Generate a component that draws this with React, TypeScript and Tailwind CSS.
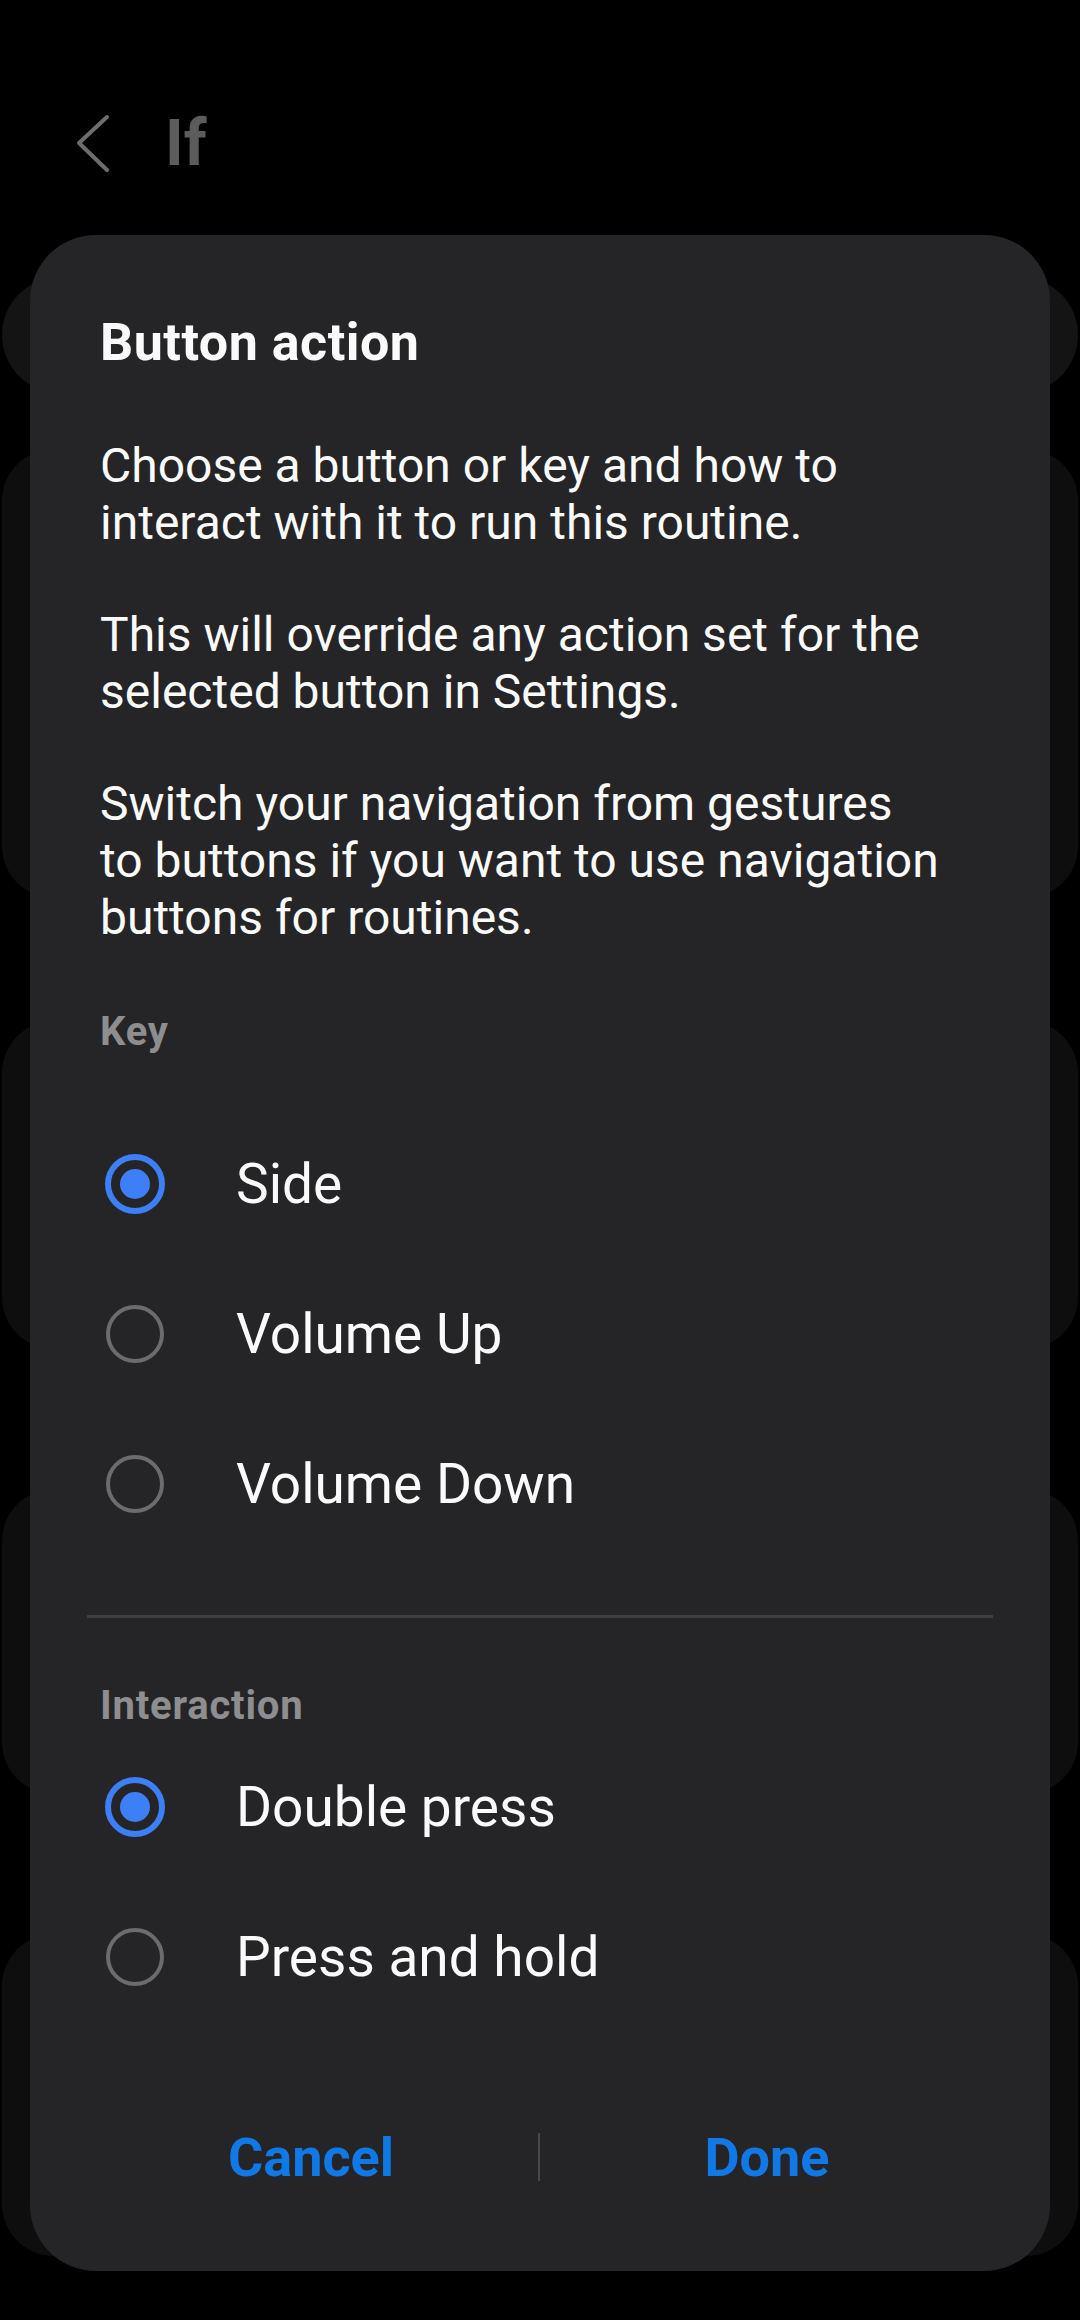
import React from 'react'

type Option = { label: string; selected: boolean }

const keys: Option[] = [
  { label: 'Side', selected: true },
  { label: 'Volume Up', selected: false },
  { label: 'Volume Down', selected: false },
]

const interactions: Option[] = [
  { label: 'Double press', selected: true },
  { label: 'Press and hold', selected: false },
]

function Radio({ selected }: { selected: boolean }) {
  return (
    <div className="w-[60px] h-[60px] flex items-center justify-center shrink-0">
      {selected ? (
        <div className="w-[60px] h-[60px] rounded-full border-[6px] border-[#3d7ff7] flex items-center justify-center">
          <div className="w-[30px] h-[30px] rounded-full bg-[#3d7ff7]" />
        </div>
      ) : (
        <div className="w-[58px] h-[58px] rounded-full border-[4px] border-[#6c6c6e]" />
      )}
    </div>
  )
}

function OptionRow({ option }: { option: Option }) {
  return (
    <div className="flex items-center h-[150px] pl-[5px]">
      <Radio selected={option.selected} />
      <span className="ml-[71px] text-[55px] leading-[60px] text-[#fafafa]">{option.label}</span>
    </div>
  )
}

export default function App() {
  return (
    <div
      className="relative w-[1080px] h-[2320px] bg-black overflow-hidden"
      style={{ fontFamily: 'Roboto, "Noto Sans", "Liberation Sans", sans-serif' }}
    >
      {/* Page underneath, dimmed */}
      <div className="flex flex-col">
        <div className="flex items-center h-[100px] mt-[94px] pl-[72px]">
          <svg width="40" height="60" viewBox="0 0 40 60" fill="none">
            <polyline
              points="35,3 7,29 35,56"
              stroke="#6d6d6d"
              strokeWidth="4"
              strokeLinecap="round"
              strokeLinejoin="round"
            />
          </svg>
          <span className="ml-[53px] text-[64px] leading-[76px] font-bold text-[#5c5c5c]">If</span>
        </div>
        <div className="mx-[2px] mt-[83px] h-[116px] rounded-[58px] bg-[#141414]" />
        <div className="mx-[2px] mt-[56px] h-[449px] rounded-[52px] bg-[#0e0e0e]" />
        <div className="mx-[2px] mt-[123px] h-[328px] rounded-[52px] bg-[#0e0e0e]" />
        <div className="mx-[2px] mt-[140px] h-[305px] rounded-[52px] bg-[#0e0e0e]" />
        <div className="mx-[2px] mt-[140px] h-[322px] rounded-[52px] bg-[#0e0e0e]" />
      </div>

      {/* Dialog */}
      <div className="absolute top-[235px] left-[30px] w-[1020px] rounded-[66px] bg-[#252527] px-[70px] pt-[78px] pb-[64px] flex flex-col">
        <h2 className="text-[52px] leading-[60px] font-bold tracking-[0.5px] text-[#fafafa]">Button action</h2>

        <div className="mt-[64px] text-[48px] leading-[57px] text-[#fafafa] flex flex-col gap-[55px]">
          <p>
            Choose a button or key and how to
            <br />
            interact with it to run this routine.
          </p>
          <p>
            This will override any action set for the
            <br />
            selected button in Settings.
          </p>
          <p>
            Switch your navigation from gestures
            <br />
            to buttons if you want to use navigation
            <br />
            buttons for routines.
          </p>
        </div>

        <div className="mt-[62px] text-[40px] leading-[48px] font-bold tracking-[0.8px] text-[#8e8e90]">Key</div>
        <div className="mt-[53px] flex flex-col">
          {keys.map((o) => (
            <OptionRow key={o.label} option={o} />
          ))}
        </div>

        <div className="mt-[56px] mx-[-13px] h-[3px] bg-[#3f3f41]" />

        <div className="mt-[64px] text-[40px] leading-[48px] font-bold tracking-[0.8px] text-[#8e8e90]">Interaction</div>
        <div className="mt-[2px] flex flex-col">
          {interactions.map((o) => (
            <OptionRow key={o.label} option={o} />
          ))}
        </div>

        <div className="mt-[75px] ml-[-16px] mr-[-14px] h-[100px] flex items-center">
          <button className="flex-1 text-center text-[54px] font-bold text-[#1179e6]">Cancel</button>
          <div className="w-[2px] h-[48px] bg-[#48484a]" />
          <button className="flex-1 text-center text-[54px] font-bold text-[#1179e6]">Done</button>
        </div>
      </div>
    </div>
  )
}
